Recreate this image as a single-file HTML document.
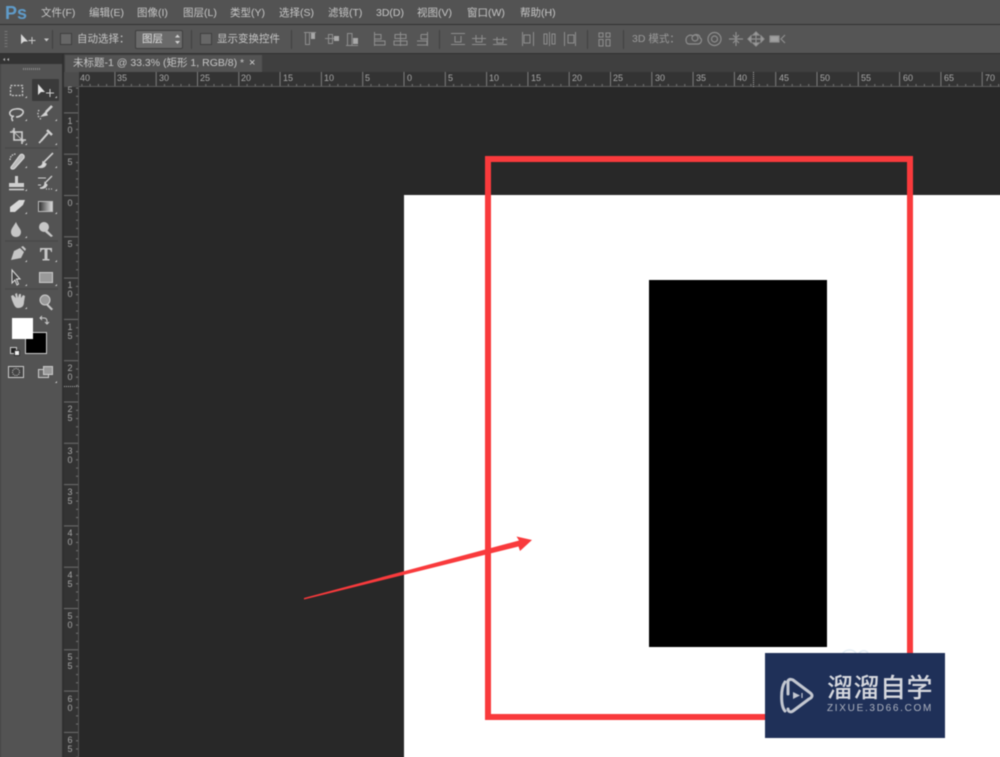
<!DOCTYPE html>
<html>
<head>
<meta charset="utf-8">
<style>
html,body{margin:0;padding:0;background:#282828;overflow:hidden;}
#w{position:relative;width:1000px;height:757px;overflow:hidden;}
#p{position:relative;width:1000px;height:757px;background:#282828;font-family:"Liberation Sans","Noto Sans CJK SC",sans-serif;color:#c4c4c4;filter:blur(.4px);}
.a{position:absolute;}
.m{position:absolute;top:6px;font-size:10.5px;line-height:14px;color:#c6c6c6;white-space:nowrap;}
.o{position:absolute;top:32px;font-size:10.5px;line-height:14px;color:#c6c6c6;white-space:nowrap;}
.h{position:absolute;top:73px;font-size:9px;line-height:10px;color:#a8a8a8;white-space:nowrap;}
.v{position:absolute;left:66px;font-size:9px;line-height:9px;width:8px;text-align:center;color:#a8a8a8;}
svg{position:absolute;left:0;top:0;}
</style>
</head>
<body>
<div id="w">
<div id="p">
<!-- bars -->
<div class="a" style="left:-10px;top:-10px;width:1020px;height:34px;background:#535353"></div>
<div class="a" style="left:-10px;top:24px;width:1020px;height:1px;background:#333"></div>
<div class="a" style="left:-10px;top:25px;width:1020px;height:29px;background:#555"></div>
<div class="a" style="left:-10px;top:53px;width:1020px;height:1px;background:#303030"></div>
<div class="a" style="left:-10px;top:54px;width:1020px;height:18px;background:#3f3f3f"></div>
<div class="a" style="left:-10px;top:54px;width:72px;height:713px;background:#535353"></div>
<div class="a" style="left:-10px;top:54px;width:72px;height:10px;background:#333"></div>
<div class="a" style="left:0;top:64px;width:1px;height:703px;background:#444"></div>
<div class="a" style="left:62px;top:54px;width:2px;height:713px;background:#303030"></div>
<div class="a" style="left:65px;top:55px;width:197px;height:17px;background:#535353"></div>
<!-- rulers -->
<div class="a" style="left:64px;top:72px;width:946px;height:15px;background:#333"></div>
<div class="a" style="left:64px;top:72px;width:15px;height:695px;background:#333"></div>
<div class="a" style="left:64px;top:72px;width:15px;height:15px;background:#4c4c4c"></div>
<!-- canvas extension below -->
<div class="a" style="left:79px;top:757px;width:325px;height:10px;background:#282828"></div>
<!-- document -->
<div class="a" style="left:404px;top:195px;width:606px;height:572px;background:#fff"></div>
<div class="a" style="left:649px;top:280px;width:178px;height:367px;background:#000"></div>
<div class="a" style="left:485px;top:156px;width:416px;height:552px;border:6px solid #f93a3c"></div>

<svg width="1000" height="757" viewBox="0 0 1000 757" fill="none">
<defs>
<pattern id="hr" patternUnits="userSpaceOnUse" x="403.5" y="72" width="41.3" height="15">
<path d="M.5 0V15" stroke="#7e7e7e"/>
<path d="M8.8 12V15M17 12V15M25.3 12V15M33.5 12V15" stroke="#777"/>
<path d="M0 14.5H41.3" stroke="#5c5c5c"/>
</pattern>
<pattern id="vr" patternUnits="userSpaceOnUse" x="64" y="195" width="15" height="41.3">
<path d="M0 .5H15" stroke="#6e6e6e"/>
<path d="M12 8.8H15M12 17H15M12 25.3H15M12 33.5H15" stroke="#777"/>
<path d="M14.5 0V41.3" stroke="#565656"/>
</pattern>
</defs>
<rect x="79" y="72" width="921" height="15" fill="url(#hr)"/>
<rect x="64" y="87" width="15" height="670" fill="url(#vr)"/>
<path d="M753.5 72V87" stroke="#aaa" stroke-dasharray="1 1"/>
<path d="M64 386.5H79" stroke="#aaa" stroke-dasharray="1 1"/>

<!-- options bar grip + separators -->
<path d="M6 31V49" stroke="#777" stroke-width="3" stroke-dasharray="1 2"/>
<path d="M52.5 30V49M191.5 30V49M291.5 30V49M439.5 30V49M587.5 30V49M623.5 30V49" stroke="#404040"/>
<!-- move tool option -->
<path d="M21 34V44L24 41.5H28Z" fill="#d8d8d8"/>
<path d="M32 37V44M28.5 40.5H35.5" stroke="#c8c8c8"/>
<path d="M44 38.5H49L46.5 41.5Z" fill="#c8c8c8"/>
<!-- checkboxes -->
<rect x="60.5" y="33.5" width="11" height="11" fill="#676767" stroke="#3e3e3e"/>
<rect x="200.5" y="33.5" width="11" height="11" fill="#676767" stroke="#3e3e3e"/>
<!-- select -->
<rect x="135.5" y="30.5" width="47" height="18" rx="1.5" fill="#6a6a6a" stroke="#3e3e3e"/>
<path d="M175 37.5H180L177.5 34.5ZM175 41H180L177.5 44Z" fill="#d0d0d0"/>

<!-- align icons -->
<g stroke="#8e8e8e" stroke-width="1">
<path d="M304 32.5H316M305.5 33V44.5H309.5V33"/><rect x="311" y="33" width="4" height="6" fill="#a8a8a8" stroke="none"/>
<path d="M325 38.5H339M328.5 34.5H332.5V43.5H328.5Z"/><rect x="334" y="36" width="5" height="5" fill="#a8a8a8" stroke="none"/>
<path d="M346 45.5H358M347.5 45V33.5H352V45"/><rect x="353" y="38" width="5" height="6" fill="#a8a8a8" stroke="none"/>
<path d="M374.5 32V46M375 34.5H381V39H375M375 41H385V45H375"/>
<path d="M400.5 32V46M395 34.5H406V38.5H395ZM394 41H407V45H394Z"/>
<path d="M427.5 32V46M421 34.5H427M417 41H427V45H417M421 34.5V39H427"/>
<path d="M451 33.5H465M451 44.5H465M455 36V42H461V36"/>
<path d="M472 38.5H486M476 35V42H482V35M472 44.5H486"/>
<path d="M493 44.5H507M497 37V43H503V37M493 39.5H507"/>
<path d="M522.5 32V46M533.5 32V46M524 35H530V43H524Z"/>
<path d="M549.5 32V46M544 34H547V44H544ZM552 34H555V44H552Z"/>
<path d="M575.5 32V46M564.5 32V46M568 35H574V43H568Z"/>
<path d="M599 33H603V37H599ZM606 33H610V37H606ZM599 39.5H603V46H599ZM606 39.5H610V46H606Z"/>
</g>
<!-- 3D icons -->
<g stroke="#8e8e8e" stroke-width="1.2">
<path d="M686 40C686 36 690 34 693 36C696 33 700 35 700 38C703 39 701 44 698 44H689C687 44 686 42 686 40Z"/><circle cx="695" cy="38" r="3"/>
<circle cx="714.5" cy="39" r="6.5"/><circle cx="714.5" cy="39" r="3"/>
<path d="M736 32V46M729 39H743M733 35L736 38L739 35M733 43L736 40L739 43"/>
<path d="M749 39H763M756 33V45"/><path d="M753 35H759L756 32ZM753 43H759L756 46ZM751 36V42L748 39ZM761 36V42L764 39Z" fill="#a0a0a0"/>
<rect x="770" y="36" width="9" height="6" fill="#a0a0a0"/><path d="M785 35L781 39L785 43"/>
</g>

<!-- toolbox grip -->
<path d="M5 58L3 59.5L5 61ZM9 58L7 59.5L9 61Z" fill="#bbb"/>
<path d="M23 69H40" stroke="#888" stroke-width="2" stroke-dasharray="1 1"/>
<rect x="32" y="79" width="27" height="22" rx="1" fill="#3a3a3a"/>
<path d="M5 148H58M5 241H58M5 289H58" stroke="#464646"/>

<!-- tools -->
<g stroke="#cfcfcf" stroke-width="1.3">
<rect x="10.5" y="85.5" width="12" height="10" stroke-dasharray="2 1.4"/>
<path d="M38 84V95L41 92H45Z" fill="#e0e0e0" stroke="none"/>
<path d="M50 89V97M46 93H54" stroke-width="1"/>
<path d="M16 117C21 117 24 113 23 111C21 108 12 108 10 112C9 115 12 117 14 116M13 116C11 118 12 120 13 121" stroke-width="1.6"/>
<path d="M39 110C37 113 38 118 41 119" stroke-dasharray="1.5 1.5"/>
<path d="M52 106L46 112" stroke-width="2.6"/><path d="M42 116L46 112L47 115Z" fill="#ddd"/>
<path d="M14 128V140H26M10 132H22V144" stroke-width="1.6"/>
<path d="M12 130L24 142" stroke-width=".8"/>
<path d="M41 141L48 133" stroke-width="2"/><path d="M47 130L52 135" stroke-width="2.4"/><path d="M39 143L41 141" stroke-width="1.6"/>
<path d="M11 167L20 155C22 153 25 155 24 158L15 168C13 170 10 169 11 167Z" fill="#bbb" stroke="#ddd" stroke-width="1"/>
<path d="M10 160C10 156 13 154 16 154" stroke-dasharray="1.5 1"/>
<path d="M53 153L44 162" stroke-width="1.6"/><path d="M38 167C41 167 43 165 43 162L46 164C45 167 42 168 38 167Z" fill="#ddd"/>
<path d="M15 176H18V183H24V187H9V183H15Z" fill="#cfcfcf" stroke="none"/><path d="M9 189.5H24" stroke-width="1.6"/>
<path d="M52 176L45 183M40 188C43 188 45 186 45 183L47 185C46 187 44 189 40 188Z" fill="#ccc"/>
<path d="M38 178H46M38 185H41" stroke-width="1"/><path d="M46 189L53 189" stroke-dasharray="1 1.5"/>
<path d="M10 207L19 200H25L23 205L15 212H10Z" fill="#d8d8d8" stroke="none"/>
</g>
<defs><linearGradient id="gr" x1="0" x2="1"><stop offset="0" stop-color="#2a2a2a"/><stop offset="1" stop-color="#e0e0e0"/></linearGradient></defs>
<rect x="38.5" y="201.5" width="14" height="10" fill="url(#gr)" stroke="#bbb"/>
<g fill="#c6c6c6" stroke="none">
<path d="M16 222C13 227 11 229 11 232C11 235 13 237 16 237C19 237 21 235 21 232C21 229 18 227 16 222Z"/>
<circle cx="44" cy="227" r="5"/><path d="M47 230L53 236L51 237L45 232Z"/>
<path d="M11 260L14 251L20 248L24 252L21 258Z"/><path d="M21 247L25 251L26 249L23 246Z"/>
<path d="M40 248H52V252H51C51 250 50 249.5 47.5 249.5V259H49.5V260.5H42.5V259H44.5V249.5C42 249.5 41 250 41 252H40Z"/>
<path d="M12 270V283L15 280L17 285L18.5 284L16.5 279H20Z" fill="#444" stroke="#ddd"/>
<path d="M12 300L11 296L13 295L16 298L15 294L17 293L18 298L19 294L21 294L21 298L23 295L25 296L24 302C24 306 22 308 18 308C15 308 14 305 12 300Z"/>
<circle cx="45" cy="300" r="5" fill="#999" stroke="#d0d0d0"/><path d="M48 304L53 309L51.5 310.5L46.5 305.5Z"/>
</g>
<rect x="39.5" y="272.5" width="13" height="10" fill="#999" stroke="#ccc"/>
<path d="M27 96L25 98H27ZM27 119L25 121H27ZM27 143L25 145H27ZM27 166L25 168H27ZM27 189L25 191H27ZM27 212L25 214H27ZM27 236L25 238H27ZM27 260L25 262H27ZM27 284L25 286H27ZM27 307L25 309H27ZM57 96L55 98H57ZM57 119L55 121H57ZM57 143L55 145H57ZM57 166L55 168H57ZM57 189L55 191H57ZM57 212L55 214H57ZM57 260L55 262H57ZM57 284L55 286H57ZM57 381L55 383H57Z" fill="#ccc"/>

<!-- swatches -->
<rect x="25.5" y="332.5" width="21" height="21" fill="#000" stroke="#cfcfcf"/>
<rect x="12" y="318" width="21" height="21" fill="#fff"/>
<path d="M40 318H44C47 318 47 320 47 323M42 316L40 318L42 320M45 322L47 324L49 322" stroke="#ccc"/>
<rect x="10.5" y="347.5" width="6" height="6" fill="#222" stroke="#ccc"/><rect x="14.5" y="350.5" width="5" height="5" fill="#eee" stroke="#333"/>
<rect x="8.5" y="366.5" width="15" height="11" fill="#444" stroke="#ccc"/><circle cx="16" cy="372" r="3.5" stroke="#ccc" stroke-dasharray="1 1"/>
<rect x="38.5" y="369.5" width="10" height="8" fill="#666" stroke="#ccc"/><rect x="43.5" y="366.5" width="9" height="8" fill="#999" stroke="#ccc"/>

<!-- arrow -->
<path d="M304 598L519 540.5L516.5 536.5L532 540L520 551L518.5 546.5L304 599.5Z" fill="#f93a3c"/>
<!-- faint ghost above logo -->
<path d="M843 653C846 649 853 649 856 653M859 653C862 650 866 650 868 653" stroke="#e4edf4" stroke-width="1.5"/>
</svg>

<!-- logo text -->
<div class="a" style="left:5px;top:1px;font-size:18px;line-height:24px;font-weight:bold;color:#5f9bc9;">Ps</div>
<span class="m" style="left:41px">文件(F)</span>
<span class="m" style="left:89px">编辑(E)</span>
<span class="m" style="left:137px">图像(I)</span>
<span class="m" style="left:183px">图层(L)</span>
<span class="m" style="left:230px">类型(Y)</span>
<span class="m" style="left:279px">选择(S)</span>
<span class="m" style="left:328px">滤镜(T)</span>
<span class="m" style="left:376px">3D(D)</span>
<span class="m" style="left:417px">视图(V)</span>
<span class="m" style="left:467px">窗口(W)</span>
<span class="m" style="left:520px">帮助(H)</span>

<span class="o" style="left:77px">自动选择：</span>
<span class="o" style="left:142px;color:#e0e0e0">图层</span>
<span class="o" style="left:217px">显示变换控件</span>
<span class="o" style="left:632px;color:#9a9a9a">3D 模式：</span>

<span class="a" style="left:73px;top:56px;font-size:10.5px;line-height:14px;color:#c6c6c6;white-space:nowrap">未标题-1 @ 33.3% (矩形 1, RGB/8) *</span>
<span class="a" style="left:249px;top:56px;font-size:11px;line-height:14px;color:#d0d0d0">×</span>

<!-- ruler labels horizontal -->
<span class="h" style="left:79px;width:11px;overflow:hidden;direction:rtl">40</span>
<span class="h" style="left:117px">35</span>
<span class="h" style="left:159px">30</span>
<span class="h" style="left:200px">25</span>
<span class="h" style="left:241px">20</span>
<span class="h" style="left:283px">15</span>
<span class="h" style="left:324px">10</span>
<span class="h" style="left:365px">5</span>
<span class="h" style="left:407px">0</span>
<span class="h" style="left:448px">5</span>
<span class="h" style="left:489px">10</span>
<span class="h" style="left:531px">15</span>
<span class="h" style="left:572px">20</span>
<span class="h" style="left:613px">25</span>
<span class="h" style="left:655px">30</span>
<span class="h" style="left:696px">35</span>
<span class="h" style="left:737px">40</span>
<span class="h" style="left:779px">45</span>
<span class="h" style="left:820px">50</span>
<span class="h" style="left:861px">55</span>
<span class="h" style="left:903px">60</span>
<span class="h" style="left:944px">65</span>
<span class="h" style="left:985px">70</span>

<!-- ruler labels vertical -->
<div class="v" style="top:86px">5</div>
<div class="v" style="top:117px">1<br>0</div>
<div class="v" style="top:158px">5</div>
<div class="v" style="top:199px">0</div>
<div class="v" style="top:240px">5</div>
<div class="v" style="top:281px">1<br>0</div>
<div class="v" style="top:323px">1<br>5</div>
<div class="v" style="top:364px">2<br>0</div>
<div class="v" style="top:405px">2<br>5</div>
<div class="v" style="top:447px">3<br>0</div>
<div class="v" style="top:488px">3<br>5</div>
<div class="v" style="top:529px">4<br>0</div>
<div class="v" style="top:571px">4<br>5</div>
<div class="v" style="top:612px">5<br>0</div>
<div class="v" style="top:653px">5<br>5</div>
<div class="v" style="top:695px">6<br>0</div>
<div class="v" style="top:736px">6<br>5</div>

<!-- watermark -->
<div class="a" style="left:765px;top:653px;width:180px;height:85px;background:#1f3058"></div>
<svg width="1000" height="757" viewBox="0 0 1000 757" fill="none">
<path d="M785 682C780.5 688 780.5 706 785 711" stroke="#c3c7d0" stroke-width="3" stroke-linecap="round"/>
<path d="M788 681C789 679 791 679 793 680L809 692C813 694.5 813 697 809 699L793 711C790 713 788 711 788 709" stroke="#c3c7d0" stroke-width="3" stroke-linecap="round" stroke-linejoin="round"/>
<path d="M788 681V694" stroke="#c3c7d0" stroke-width="3" stroke-linecap="round"/>
<path d="M793 692L800 695.5L793 699Z" fill="#c3c7d0"/>
<path d="M802 693V698" stroke="#c3c7d0" stroke-width="1.2"/>
</svg>
<div class="a" style="left:827px;top:672px;font-size:26px;line-height:32px;font-weight:500;color:#d6d8de;white-space:nowrap;letter-spacing:.5px">溜溜自学</div>
<div class="a" style="left:827px;top:703px;font-size:10px;line-height:12px;color:#aeb3bf;white-space:nowrap;letter-spacing:1.7px">ZIXUE.3D66.COM</div>
</div>
</div>
</body>
</html>
